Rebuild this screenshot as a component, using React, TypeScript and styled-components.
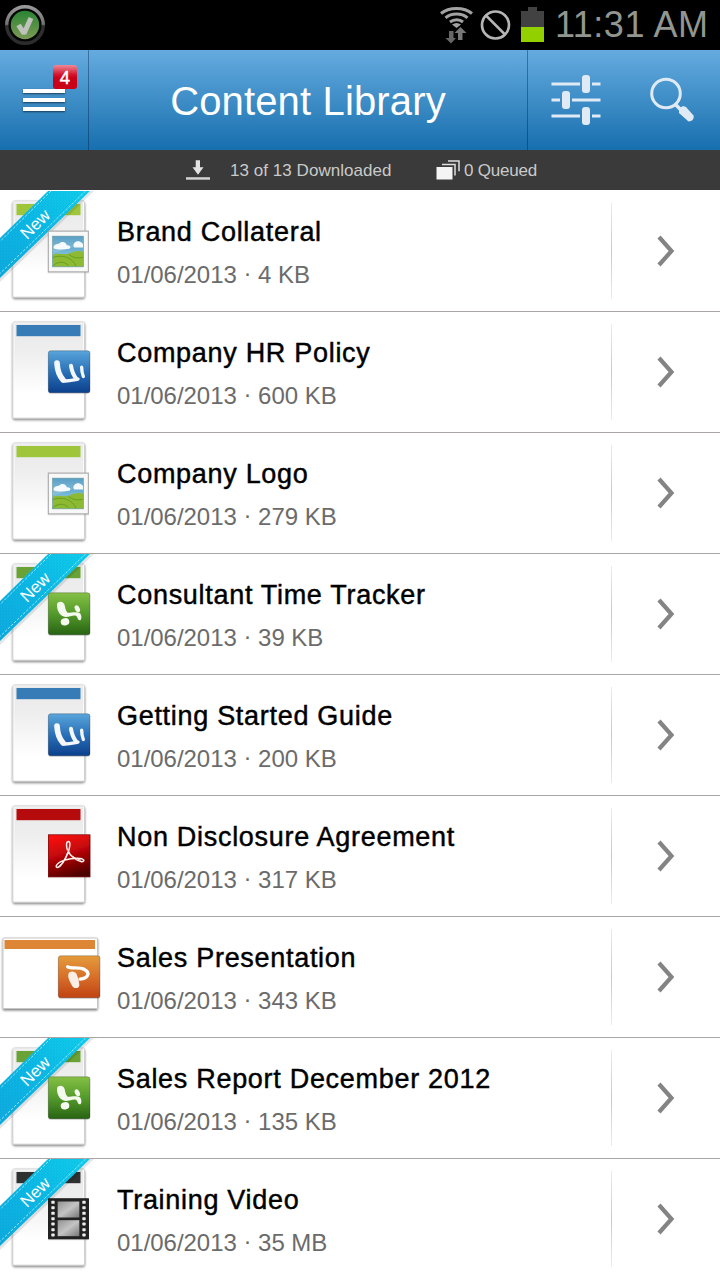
import React from 'react';
import styled, { createGlobalStyle } from 'styled-components';

const GlobalStyle = createGlobalStyle`
  body { margin: 0; background: #fff; }
  * { box-sizing: border-box; }
`;

const Screen = styled.div`
  width: 720px;
  height: 1280px;
  overflow: hidden;
  display: flex;
  flex-direction: column;
  background: #fff;
  font-family: 'Liberation Sans', Arial, sans-serif;
`;

const StatusBar = styled.div`
  height: 50px;
  flex: none;
  display: flex;
  align-items: center;
  justify-content: space-between;
  background: #000;
  padding: 0 9px 0 5px;
`;

const StatusIcons = styled.div`
  display: flex;
  align-items: center;
`;

const Clock = styled.span`
  margin-left: 8px;
  width: 156px;
  font-size: 36px;
  line-height: 50px;
  letter-spacing: 0.5px;
  white-space: nowrap;
  color: #929690;
`;

const Header = styled.header`
  height: 100px;
  flex: none;
  display: flex;
  background: linear-gradient(#65abdf, #176fae);
`;

const MenuButton = styled.div`
  width: 89px;
  border-right: 1px solid rgba(0, 30, 70, 0.4);
  padding: 39px 0 0 23px;
  position: relative;
  display: flex;
  flex-direction: column;
  gap: 5px;
`;

const MenuLine = styled.div`
  width: 42px;
  height: 4px;
  background: #fff;
  box-shadow: 0 1px 2px rgba(0, 0, 0, 0.55);
`;

const CountBadge = styled.div`
  position: absolute;
  left: 53px;
  top: 15px;
  width: 24px;
  height: 24px;
  border-radius: 3px;
  background: linear-gradient(#ee8997, #d2152c 40%, #c90018 55%);
  color: #fff;
  font-size: 18.5px;
  -webkit-text-stroke: 0.5px #fff;
  line-height: 25px;
  text-align: center;
`;

const Title = styled.h1`
  flex: 1;
  margin: 0;
  font-size: 40px;
  font-weight: normal;
  line-height: 102px;
  letter-spacing: 0.15px;
  text-align: center;
  color: #fff;
`;

const Actions = styled.div`
  width: 193px;
  border-left: 1px solid rgba(0, 30, 70, 0.4);
  display: flex;
  svg { display: block; }
`;

const SyncBar = styled.div`
  height: 40px;
  flex: none;
  display: flex;
  align-items: center;
  background: #393a39;
  color: #c9cac9;
  font-size: 17px;
  line-height: 41px;
  padding-left: 186px;
  white-space: nowrap;
`;

const DownloadCount = styled.span`
  width: 206px;
  margin-left: 20px;
  letter-spacing: 0.05px;
`;

const QueueCount = styled.span`
  margin-left: 4px;
  letter-spacing: -0.2px;
`;

const List = styled.div`
  padding-top: 1px;
`;

const Row = styled.div`
  height: 121px;
  display: flex;
  border-bottom: 1px solid #aaa6a8;
  &:last-child { border-bottom-color: transparent; }
`;

const Thumb = styled.svg`
  width: 117px;
  height: 120px;
  flex: none;
  display: block;
`;

const Info = styled.div`
  width: 494px;
  padding-top: 22px;
`;

const Name = styled.div`
  font-size: 27px;
  line-height: 38px;
  letter-spacing: 0.7px;
  color: #000;
  -webkit-text-stroke: 0.45px #000;
  white-space: nowrap;
`;

const Meta = styled.div`
  margin-top: 5px;
  font-size: 24px;
  line-height: 38px;
  letter-spacing: -0.03px;
  color: #6b6b6b;
`;

const Dot = styled.span`
  position: relative;
  top: -2px;
`;

const Divider = styled.div`
  width: 1px;
  height: 96px;
  margin-top: 12px;
  background: linear-gradient(#ececec, #c8c8c8 50%, #ececec);
`;

const Chevron = styled.svg`
  width: 20px;
  height: 34px;
  margin: 43px 0 0 44px;
`;

type Kind = 'image' | 'word' | 'excel' | 'pdf' | 'slides' | 'video';

const stripColor: Record<Kind, string> = {
  image: '#9fc63b',
  word: '#377cb6',
  excel: '#6aa335',
  pdf: '#b60b0d',
  slides: '#dc8636',
  video: '#2f3030',
};

const items: { name: string; size: string; kind: Kind; isNew?: boolean }[] = [
  { name: 'Brand Collateral', size: '4 KB', kind: 'image', isNew: true },
  { name: 'Company HR Policy', size: '600 KB', kind: 'word' },
  { name: 'Company Logo', size: '279 KB', kind: 'image' },
  { name: 'Consultant Time Tracker', size: '39 KB', kind: 'excel', isNew: true },
  { name: 'Getting Started Guide', size: '200 KB', kind: 'word' },
  { name: 'Non Disclosure Agreement', size: '317 KB', kind: 'pdf' },
  { name: 'Sales Presentation', size: '343 KB', kind: 'slides' },
  { name: 'Sales Report December 2012', size: '135 KB', kind: 'excel', isNew: true },
  { name: 'Training Video', size: '35 MB', kind: 'video', isNew: true },
];

const HiddenSvg = styled.svg`
  position: absolute;
`;

const Defs = () => (
  <HiddenSvg width="0" height="0">
    <defs>
      <linearGradient id="paper" x2="0" y2="1"><stop stopColor="#e9e9e9" /><stop offset=".3" stopColor="#eeeeee" /><stop offset=".75" stopColor="#fff" /></linearGradient>
      <linearGradient id="word" x2="0" y2="1"><stop stopColor="#58a5da" /><stop offset=".5" stopColor="#2a70b8" /><stop offset="1" stopColor="#0c408c" /></linearGradient>
      <linearGradient id="excel" x2="0" y2="1"><stop stopColor="#84c044" /><stop offset=".5" stopColor="#549a2c" /><stop offset="1" stopColor="#286313" /></linearGradient>
      <linearGradient id="pdf" x1=".3" x2=".6" y2="1"><stop stopColor="#fa0d0e" /><stop offset=".4" stopColor="#c70708" /><stop offset="1" stopColor="#4c0000" /></linearGradient>
      <linearGradient id="slides" x2="0" y2="1"><stop stopColor="#e59b3b" /><stop offset=".5" stopColor="#d7702a" /><stop offset="1" stopColor="#c04313" /></linearGradient>
      <linearGradient id="sky" x2="0" y2="1"><stop stopColor="#3d8fbd" /><stop offset="1" stopColor="#a9dcec" /></linearGradient>
      <linearGradient id="film" x2="1" y2="1"><stop stopColor="#929292" /><stop offset=".5" stopColor="#c4c4c4" /><stop offset="1" stopColor="#777" /></linearGradient>
      <linearGradient id="ribbon" x1="1" x2="0" y2="1"><stop stopColor="#10cdec" /><stop offset=".5" stopColor="#0cb8e4" /><stop offset="1" stopColor="#0eaade" /></linearGradient>
      <pattern id="weave" width="3" height="3" patternUnits="userSpaceOnUse"><path d="M0 .5h1M2 2h1" stroke="#0077b5" strokeOpacity=".14" /></pattern>
      <filter id="drop" x="-20%" y="-20%" width="140%" height="140%"><feDropShadow dx="0" dy="1.5" stdDeviation="1.3" floodOpacity=".5" /></filter>
      <filter id="soft" x="-20%" y="-20%" width="140%" height="140%"><feDropShadow dx="0" dy="1" stdDeviation=".8" floodOpacity=".4" /></filter>
    </defs>
  </HiddenSvg>
);

/* Badges are drawn on a 126-unit square, three units to the pixel. */
const Badge = ({ kind }: { kind: Kind }) => {
  if (kind === 'image') {
    return (
      <g>
        <rect x="1" y="5" width="120" height="122" fill="#f8f8f8" stroke="#aaa" strokeWidth="3" />
        <rect x="14" y="20" width="92" height="92" fill="url(#sky)" />
        <path d="M17 56c-2-10 10-13 17-14 9-10 22-2 22 5 12 0 14 7 8 11-17 2-34 4-47-2zM76 48c1-13 15-17 24-9l6 5v10H78z" fill="#f4fbfd" />
        <path d="M14 76c18-7 35 1 49-3 15-9 31-10 43-6v45H14z" fill="#8dba33" />
        <path d="M14 84c28-10 60 0 70 26M62 74c10 10 26 14 43 9M16 108c14-14 34-12 46 0" fill="none" stroke="#649f24" strokeWidth="3" />
        <path d="M15 21h90v26C72 49 46 66 15 70z" fill="#fff" opacity=".15" />
        <rect x="14" y="20" width="92" height="92" fill="none" stroke="#6a9aa2" strokeWidth="2" />
      </g>
    );
  }
  if (kind === 'video') {
    return (
      <g>
        <rect width="123" height="123" y="2" rx="2" fill="#222" />
        <rect x="29" y="12" width="65" height="48" fill="url(#film)" />
        <rect x="29" y="68" width="65" height="48" fill="url(#film)" />
        {[10, 26, 43, 59, 75, 92, 108].map((y) => (
          <g key={y} fill="#eee">
            <rect x="10" y={y} width="10" height="9" rx="2" />
            <rect x="103" y={y} width="10" height="9" rx="2" />
          </g>
        ))}
      </g>
    );
  }
  return (
    <g>
      <rect x="1" y="1" width="125" height="126" rx={kind === 'pdf' ? 0 : 7} fill={`url(#${kind})`} stroke={kind === 'pdf' ? '#700' : 'rgba(0,0,0,.28)'} strokeWidth="2" />
      {kind === 'word' && (
        <g fill="none" stroke="#f4f8fc" strokeLinecap="round" strokeLinejoin="round">
          <path d="M27 38c1 18 7 38 18 50" strokeWidth="17" />
          <path d="M44 91c14 2 30-2 46-5" strokeWidth="10" />
          <path d="M69 46c2 13 7 27 15 37" strokeWidth="12" />
          <path d="M101 50c0 9 2 20 5 28" strokeWidth="10" />
        </g>
      )}
      {kind === 'excel' && (
        <g fill="#f5faef">
          <path d="M27 36c1-11 17-11 22-1 3 8 2 18 10 26 11 0 26-5 37 1 5 6 6 18 1 21-8 3-8-10-13-13-9-3-22 5-35 3-15-4-23-22-22-37z" />
          <ellipse cx="51" cy="88" rx="13" ry="11" transform="rotate(-10 51 88)" />
          <ellipse cx="88" cy="49" rx="7" ry="11" transform="rotate(-28 88 49)" />
        </g>
      )}
      {kind === 'pdf' && (
        <g fill="none" stroke="#fff0ee" strokeWidth="4.5" strokeLinecap="round" strokeLinejoin="round">
          <path d="M58 46c-4-13-3-25 3-25 7 0 5 14 1 29-8 20-21 45-33 49-8 0-5-10 8-17 15-8 48-13 65-9 11 4 4 11-7 7C81 74 66 62 61 50" />
          <path d="M59 53c-5 17-14 31-24 40M67 60c8 8 19 13 31 17" strokeWidth="3" />
        </g>
      )}
      {kind === 'slides' && (
        <g>
          <path d="M29 34c10 6 34 0 49 7 20 10 13 28-12 30" fill="none" stroke="#fff" strokeWidth="10" strokeLinecap="round" strokeLinejoin="round" />
          <path d="M31 57c2-12 20-11 25-1 4 11 8 22 8 34-2 10-16 10-21 2-6-11-14-24-12-35z" fill="#fbeee7" />
        </g>
      )}
    </g>
  );
};

const Ribbon = () => (
  <g>
    <path d="M50 0h44L0 91V48z" fill="#000" opacity=".1" />
    <path d="M48 0h42L0 87V47z" fill="url(#ribbon)" />
    <path d="M48 0h42L0 87V47z" fill="url(#weave)" />
    <path d="M51 0L0 50.5M85.5 0L0 82.5" stroke="#c8f4fd" strokeWidth=".9" strokeOpacity=".85" strokeDasharray="2.6 1.6" />
    <text x="35" y="39" transform="rotate(-44 35 33)" textAnchor="middle" fontSize="17" fill="#fff">New</text>
  </g>
);

const FileThumb = ({ kind, isNew }: { kind: Kind; isNew?: boolean }) => {
  const wide = kind === 'slides';
  return (
    <Thumb viewBox="0 0 117 120">
      {wide ? (
        <>
          <rect x="3" y="21" width="94.5" height="70.5" rx="1" fill="#fff" stroke="#c6c6c6" filter="url(#drop)" />
          <rect x="4.5" y="23" width="90.5" height="9" fill={stripColor[kind]} />
        </>
      ) : (
        <>
          <rect x="13" y="10" width="71.5" height="96" rx="1.5" fill="url(#paper)" stroke="#cfcfcf" filter="url(#drop)" />
          <rect x="14" y="11" width="69.5" height="94" fill="none" stroke="#fff" strokeOpacity=".7" />
          <rect x="16.5" y="13" width="64" height="11.2" fill={stripColor[kind]} />
        </>
      )}
      {isNew && <Ribbon />}
      <g transform={`translate(${wide ? 58 : 48} 38.5) scale(.3333)`} filter="url(#soft)">
        <Badge kind={kind} />
      </g>
    </Thumb>
  );
};

const App = () => (
  <Screen>
    <GlobalStyle />
    <Defs />
    <StatusBar>
      <svg width="40" height="50" viewBox="0 0 40 50">
        <defs>
          <linearGradient id="ring" x2="0" y2="1"><stop stopColor="#999" /><stop offset=".48" stopColor="#737373" /><stop offset=".52" stopColor="#303030" /><stop offset="1" stopColor="#2c2c2c" /></linearGradient>
          <linearGradient id="disc" x2="0" y2="1"><stop stopColor="#2a8433" /><stop offset="1" stopColor="#7c9b55" /></linearGradient>
        </defs>
        <circle cx="20" cy="25" r="18.3" fill="#050505" stroke="url(#ring)" strokeWidth="3.4" />
        <circle cx="20" cy="25" r="14.2" fill="url(#disc)" />
        <path d="M13.500 25l5.500 8.500L26 18" fill="none" stroke="#bfc3bb" strokeWidth="5" strokeLinejoin="bevel" />
      </svg>
      <StatusIcons>
        <svg width="107" height="50" viewBox="440 0 107 50">
          <g fill="none" stroke="#a2a2a2" strokeWidth="3">
            <path d="M441 13.500C449 6.700 464 6.700 472 13.500" />
            <path d="M445.500 17.800c6-5 16-5 22 0" />
            <path d="M450 22c4-3 9.500-3 13 0" />
          </g>
          <path d="M452 24.500c3-2 6-2 9 0l-4.500 3.500z" fill="#a2a2a2" />
          <path d="M449 31h4.500v7h2.500l-5 5.500-5.500-5.500h3.500z" fill="#666" />
          <path d="M458 40h4.500v-7h4l-6-6-6 6h3.500z" fill="#777" />
          <circle cx="495.500" cy="25" r="13.500" fill="none" stroke="#b5b5b5" strokeWidth="2.700" />
          <path d="M486 15.500l19 19" stroke="#b5b5b5" strokeWidth="2.500" />
          <path d="M521 11h7V7h9v4h7v16h-23z" fill="#424242" />
          <path d="M521 27h23v15h-23z" fill="#92d000" />
        </svg>
        <Clock>11:31 AM</Clock>
      </StatusIcons>
    </StatusBar>
    <Header>
      <MenuButton>
        <MenuLine />
        <MenuLine />
        <MenuLine />
        <CountBadge>4</CountBadge>
      </MenuButton>
      <Title>Content Library</Title>
      <Actions>
        <svg width="192" height="100" viewBox="528 50 192 100">
          <g fill="#dfeaf5">
            <path d="M551.500 82.500h28.500v3h-28.500zM592 82.500h8.500v3H592zM551.500 98.500h8.500v3h-8.500zM572 98.500h28.500v3H572zM551.500 114.500h28.500v3h-28.500zM592 114.500h8.500v3H592z" />
            <rect x="582" y="75" width="8" height="18" rx="3" />
            <rect x="562" y="91" width="8" height="18" rx="3" />
            <rect x="582" y="107" width="8" height="18" rx="3" />
          </g>
          <circle cx="666" cy="93.500" r="14.300" fill="none" stroke="#dfeaf5" strokeWidth="3" />
          <path d="M675.500 104.500l5 5" stroke="#dfeaf5" strokeWidth="3.500" />
          <path d="M679 108.500l4-2.500 3 1 7.500 8.500c1 3-1.500 6-5 6l-9.500-8.500z" fill="#dfeaf5" />
        </svg>
      </Actions>
    </Header>
    <SyncBar>
      <svg width="24" height="40" viewBox="0 0 24 40">
        <path d="M9.700 10.300h4.300v7h3.500L12 24.800l-5.500-7.500h3.200z" fill="#e2e3e2" />
        <path d="M0 27.200h24v2.500H0z" fill="#d2d3d2" />
      </svg>
      <DownloadCount>13 of 13 Downloaded</DownloadCount>
      <svg width="24" height="40" viewBox="436 150 24 40">
        <path d="M436.500 167h16v12.500h-16z" fill="#f4f4f4" />
        <path d="M442 164.500h13v11M448 160.900h11v10.300" fill="none" stroke="#dfdfdf" strokeWidth="1.500" />
      </svg>
      <QueueCount>0 Queued</QueueCount>
    </SyncBar>
    <List>
      {items.map((item) => (
        <Row key={item.name}>
          <FileThumb kind={item.kind} isNew={item.isNew} />
          <Info>
            <Name>{item.name}</Name>
            <Meta>01/06/2013 <Dot>·</Dot> {item.size}</Meta>
          </Info>
          <Divider />
          <Chevron viewBox="0 0 20 34">
            <path d="M3 3l12.500 14L3 31" fill="none" stroke="#848484" strokeWidth="4.200" />
          </Chevron>
        </Row>
      ))}
    </List>
  </Screen>
);

export default App;
